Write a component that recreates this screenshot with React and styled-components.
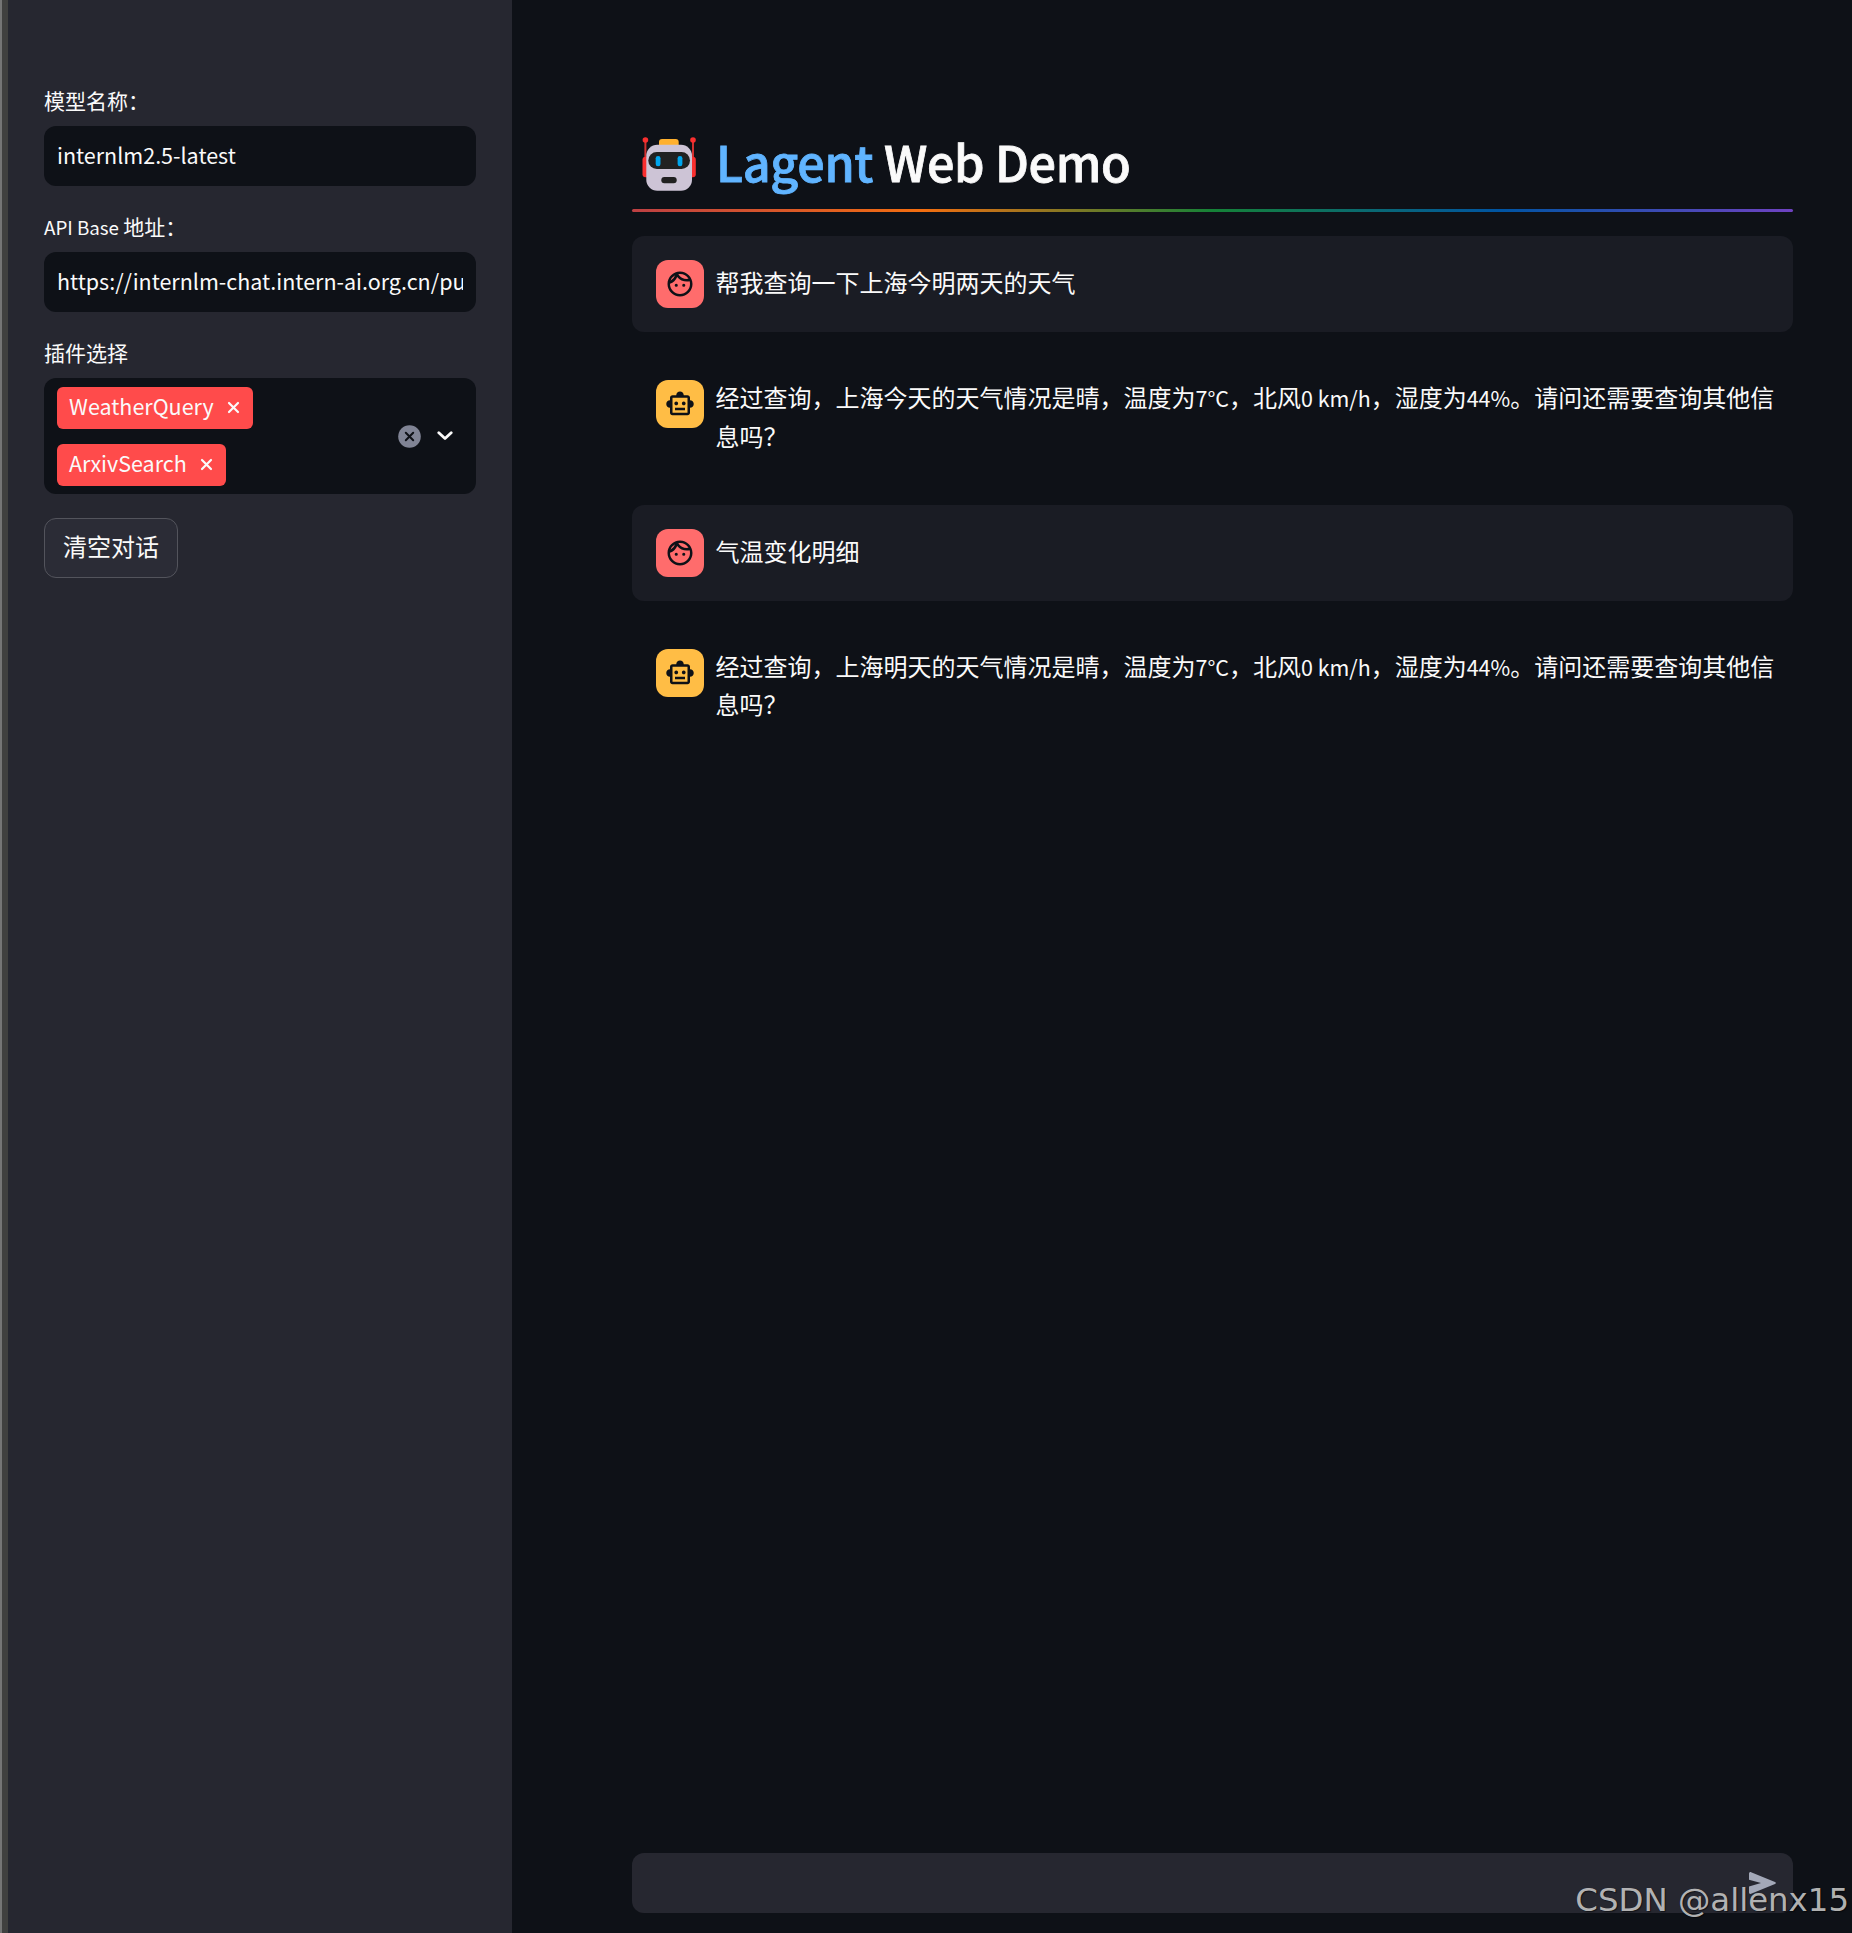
import React from "react";
import styled, { createGlobalStyle, css } from "styled-components";

const GlobalStyle = createGlobalStyle`
  * {
    box-sizing: border-box;
  }

  body {
    margin: 0;
    background: #0e1117;
    color: #fafafa;
    font-family: "Noto Sans CJK SC", "Noto Sans", sans-serif;
    font-size: 24px;
    line-height: 1.6;
  }

  h1,
  p {
    margin: 0;
  }

  svg {
    display: block;
  }
`;

const Layout = styled.div`
  display: flex;
  width: 100%;
  height: 1933px;
  overflow: hidden;
`;

const Sidebar = styled.aside`
  display: flex;
  flex-direction: column;
  align-items: flex-start;
  gap: 24px;
  flex: none;
  width: 512px;
  padding: 84px 36px 0 44px;
  background: linear-gradient(
    90deg,
    #757575 0 2px,
    #40403f 2px 8px,
    #262730 8px
  );
`;

const Field = styled.div`
  width: 100%;
`;

const Label = styled.label`
  display: flex;
  align-items: center;
  height: 36px;
  margin-bottom: 6px;
  padding-bottom: 2px;
  font-size: 21px;
  white-space: pre;
`;

// Latin letters sit a little smaller than the Chinese ones around them
const Latin = styled.span`
  font-size: 0.893em;
  line-height: 1;
`;

const Input = styled.input`
  display: block;
  width: 100%;
  height: 60px;
  padding: 0 13px 3px;
  border: 0;
  border-radius: 12px;
  outline: none;
  background: #0e1117;
  color: #fafafa;
  font-family: inherit;
  font-size: 21.5px;
`;

const Select = styled.div`
  display: flex;
  align-items: center;
  height: 116px;
  padding: 0 23px 0 13px;
  border-radius: 12px;
  background: #0e1117;
`;

const Tags = styled.div`
  display: flex;
  flex: 1;
  flex-direction: column;
  align-items: flex-start;
  gap: 15px;
`;

const Tag = styled.span`
  display: flex;
  align-items: center;
  gap: 13px;
  height: 42px;
  padding: 0 13px 0 12px;
  border-radius: 6px;
  background: #ff4b4b;
  font-size: 21.5px;
`;

const TagName = styled.span`
  line-height: 38px;
  padding-bottom: 3px;
`;

const SelectIcons = styled.div`
  display: flex;
  align-items: center;
  gap: 16px;
`;

const Button = styled.button`
  height: 60px;
  padding: 0 18px 5px;
  border: 1px solid #53545c;
  border-radius: 12px;
  background: #2b2c36;
  color: #fafafa;
  font-family: inherit;
  font-size: 24px;
`;

const Main = styled.main`
  display: flex;
  flex: 1;
  flex-direction: column;
  padding: 128px 59px 20px 120px;
`;

const Header = styled.header`
  display: flex;
  align-items: flex-start;
  gap: 20px;
  height: 81px;
  padding: 9px 0 0 10px;
`;

const Title = styled.h1`
  font-size: 48.5px;
  font-weight: 500;
  letter-spacing: -0.3px;
  line-height: 49px;
  white-space: nowrap;
  -webkit-text-stroke: 0.8px currentColor;
`;

const Blue = styled.span`
  color: #60b4ff;
`;

const Divider = styled.div`
  flex: none;
  height: 3px;
  margin-bottom: 24px;
  border-radius: 3px;
  background: linear-gradient(
    90deg,
    #bd4043,
    #f36e10,
    #158237,
    #0054a3,
    #6f42c1
  );
`;

const Messages = styled.div`
  display: flex;
  flex: 1;
  flex-direction: column;
  gap: 24px;
`;

const Bubble = styled.div`
  display: flex;
  gap: 12px;
  padding: 24px 0 24px 24px;
  border-radius: 12px;
  ${({ $user }) =>
    $user &&
    css`
      align-items: center;
      background: #1a1c24;
    `}
`;

const Avatar = styled.div`
  display: flex;
  flex: none;
  align-items: center;
  justify-content: center;
  width: 48px;
  height: 48px;
  border-radius: 12px;
  background: ${({ $user }) => ($user ? "#ff6c6c" : "#ffbd45")};
  color: #0e1117;
`;

const Text = styled.p`
  flex: 1;
  margin: -1.8px 0 1.8px -0.5px;
  line-height: 38.4px;
`;

const ChatInput = styled.div`
  display: flex;
  align-items: center;
  justify-content: flex-end;
  flex: none;
  height: 60px;
  padding-right: 17px;
  border-radius: 12px;
  background: #262730;
`;

const Watermark = styled.div`
  position: absolute;
  right: 3px;
  bottom: 13px;
  color: rgba(200, 200, 200, 0.9);
  font-family: "DejaVu Sans", sans-serif;
  font-size: 32.4px;
  line-height: 40px;
  text-shadow: 1px 1px 1px rgba(0, 0, 0, 0.5);
  white-space: nowrap;
`;

const CloseIcon = () => (
  <svg width="13" height="13" viewBox="0 0 13 13" fill="none">
    <path
      d="M2 2l9 9M11 2l-9 9"
      stroke="#fafafa"
      strokeWidth="2.2"
      strokeLinecap="round"
    />
  </svg>
);

const ClearIcon = () => (
  <svg width="23" height="23" viewBox="0 0 23 23" fill="none">
    <circle cx="11.5" cy="11.5" r="11.3" fill="#808495" />
    <path
      d="M7.8 7.8l7.4 7.4M15.2 7.8l-7.4 7.4"
      stroke="#0e1117"
      strokeWidth="2"
      strokeLinecap="round"
    />
  </svg>
);

const ChevronIcon = () => (
  <svg width="16" height="10" viewBox="0 0 16 10" fill="none">
    <path
      d="M1.8 1.8L8 7.6l6.2-5.8"
      stroke="#fafafa"
      strokeWidth="2.8"
      strokeLinecap="round"
      strokeLinejoin="round"
    />
  </svg>
);

const FaceIcon = () => (
  <svg width="30" height="30" viewBox="0 0 24 24" fill="currentColor">
    <path d="M10.25 13a1.25 1.25 0 1 1-2.5 0 1.25 1.25 0 0 1 2.5 0zM15 11.75a1.25 1.25 0 1 0 0 2.5 1.25 1.25 0 0 0 0-2.5zM22 12c0 5.52-4.48 10-10 10S2 17.52 2 12 6.48 2 12 2s10 4.48 10 10zM10.66 4.12C12.06 6.44 14.6 8 17.5 8c.46 0 .91-.05 1.34-.12C17.44 5.56 14.9 4 12 4c-.46 0-.91.05-1.34.12zM4.42 9.47a8.046 8.046 0 0 0 3.66-4.44 8.046 8.046 0 0 0-3.66 4.44zM20 12c0-.78-.12-1.53-.33-2.24-.7.15-1.42.24-2.17.24a10 10 0 0 1-7.76-3.69A10.016 10.016 0 0 1 4 11.86c.01.04 0 .09 0 .14 0 4.41 3.59 8 8 8s8-3.59 8-8z" />
  </svg>
);

const BotIcon = () => (
  <svg width="30" height="30" viewBox="0 0 24 24" fill="currentColor">
    <path d="M20 9V7c0-1.1-.9-2-2-2h-3c0-1.66-1.34-3-3-3S9 3.34 9 5H6c-1.1 0-2 .9-2 2v2c-1.66 0-3 1.34-3 3s1.34 3 3 3v4c0 1.1.9 2 2 2h12c1.1 0 2-.9 2-2v-4c1.66 0 3-1.34 3-3s-1.34-3-3-3zm-2 10H6V7h12v12zm-9-6c-.83 0-1.5-.67-1.5-1.5S8.17 10 9 10s1.5.67 1.5 1.5S9.83 13 9 13zm7.5-1.5c0 .83-.67 1.5-1.5 1.5s-1.5-.67-1.5-1.5.67-1.5 1.5-1.5 1.5.67 1.5 1.5zM8 15h8v2H8v-2z" />
  </svg>
);

const RobotLogo = () => (
  <svg width="54" height="54" viewBox="0 0 54 54">
    <path d="M3.4 4v18M51 4v18" stroke="#d3302f" strokeWidth="2" />
    <circle cx="3.4" cy="3" r="2.8" fill="#f92f2f" />
    <circle cx="51" cy="3" r="2.8" fill="#f92f2f" />
    <rect x="0.5" y="19.7" width="8" height="20.5" rx="3" fill="#f92f2f" />
    <rect x="45.8" y="19.7" width="8" height="20.5" rx="3" fill="#f92f2f" />
    <rect x="17" y="2" width="19.7" height="10" rx="3" fill="#ffb02e" />
    <rect x="4.3" y="7.7" width="45.7" height="46" rx="11" fill="#cdc4d6" />
    <rect x="6.3" y="15" width="41.7" height="17" rx="8.5" fill="#212121" />
    <rect x="13.7" y="19" width="4.8" height="10.2" rx="2.3" fill="#00a6ed" />
    <rect x="35.6" y="19" width="4.8" height="10.2" rx="2.3" fill="#00a6ed" />
    <rect x="19.3" y="40" width="15.4" height="6.3" rx="3" fill="#212121" />
  </svg>
);

const SendIcon = () => (
  <svg width="27" height="22" viewBox="0 0 27 22" fill="#a3a8b8">
    <path d="M0 1.6C0 .5 1.1-.2 2.1.2L26 10.1c1.2.5 1.2 1.5 0 2L2.1 21.8C1.1 22.2 0 21.5 0 20.4V14.5L12 11 0 7.7z" />
  </svg>
);

const PLUGINS = ["WeatherQuery", "ArxivSearch"];

const MESSAGES = [
  { user: true, text: "帮我查询一下上海今明两天的天气" },
  {
    text: "经过查询，上海今天的天气情况是晴，温度为7°C，北风0 km/h，湿度为44%。请问还需要查询其他信息吗？",
  },
  { user: true, text: "气温变化明细" },
  {
    text: "经过查询，上海明天的天气情况是晴，温度为7°C，北风0 km/h，湿度为44%。请问还需要查询其他信息吗？",
  },
];

const mixed = (text) =>
  text
    .split(/([\x20-\x7e°]+)/)
    .map((part, i) => (i % 2 ? <Latin key={i}>{part}</Latin> : part));

const Message = ({ user, text }) => (
  <Bubble $user={user}>
    <Avatar $user={user}>{user ? <FaceIcon /> : <BotIcon />}</Avatar>
    <Text>{mixed(text)}</Text>
  </Bubble>
);

export default function App() {
  return (
    <>
      <GlobalStyle />
      <Layout>
        <Sidebar>
          <Field>
            <Label>模型名称：</Label>
            <Input defaultValue="internlm2.5-latest" />
          </Field>
          <Field>
            <Label>{mixed("API Base 地址：")}</Label>
            <Input defaultValue="https://internlm-chat.intern-ai.org.cn/puyu/api/v1/" />
          </Field>
          <Field>
            <Label>插件选择</Label>
            <Select>
              <Tags>
                {PLUGINS.map((name) => (
                  <Tag key={name}>
                    <TagName>{name}</TagName>
                    <CloseIcon />
                  </Tag>
                ))}
              </Tags>
              <SelectIcons>
                <ClearIcon />
                <ChevronIcon />
              </SelectIcons>
            </Select>
          </Field>
          <Button>清空对话</Button>
        </Sidebar>
        <Main>
          <Header>
            <RobotLogo />
            <Title>
              <Blue>Lagent</Blue> Web Demo
            </Title>
          </Header>
          <Divider />
          <Messages>
            {MESSAGES.map((message, i) => (
              <Message key={i} {...message} />
            ))}
          </Messages>
          <ChatInput>
            <SendIcon />
          </ChatInput>
        </Main>
      </Layout>
      <Watermark>CSDN @allenx15</Watermark>
    </>
  );
}
